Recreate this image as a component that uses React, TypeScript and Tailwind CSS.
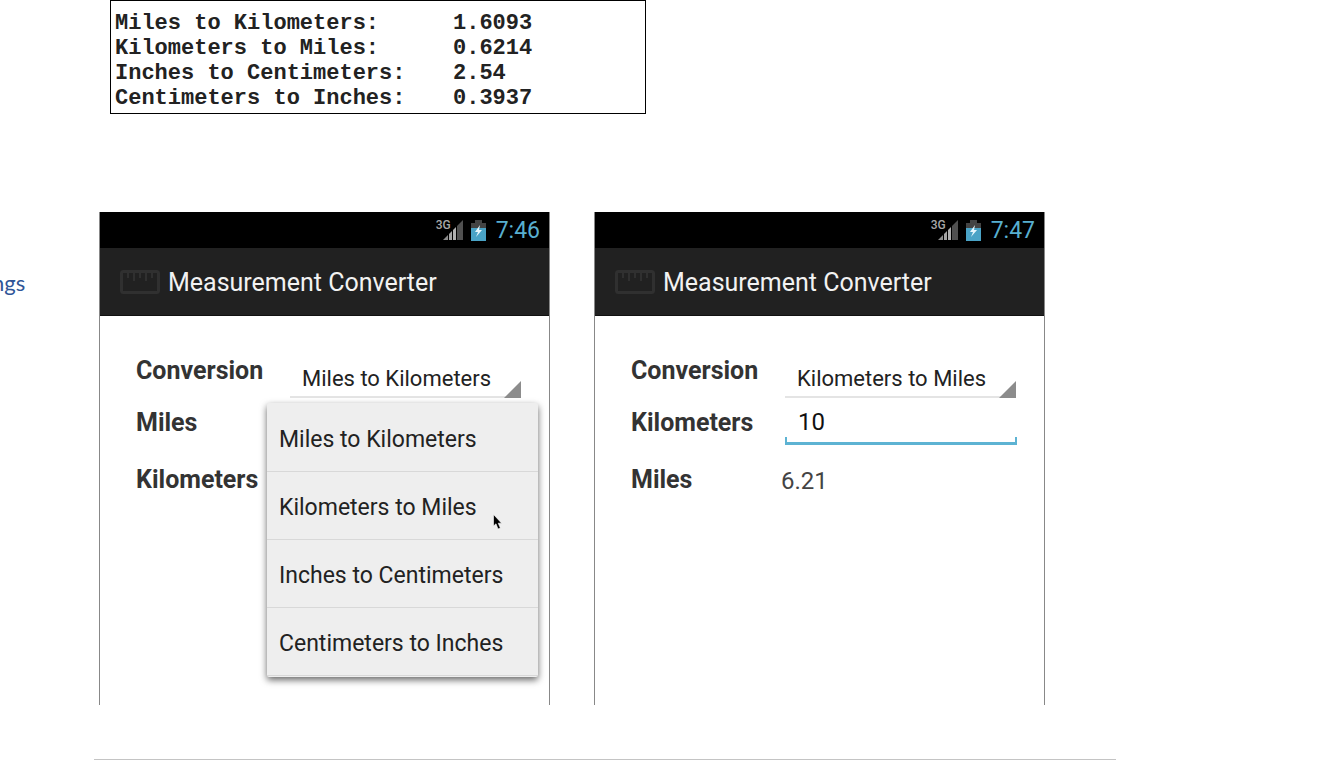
import React from "react";

const FACTORS = [
  ["Miles to Kilometers:", "1.6093"],
  ["Kilometers to Miles:", "0.6214"],
  ["Inches to Centimeters:", "2.54"],
  ["Centimeters to Inches:", "0.3937"],
];

const CONVERSIONS = [
  "Miles to Kilometers",
  "Kilometers to Miles",
  "Inches to Centimeters",
  "Centimeters to Inches",
];

function SignalIcon() {
  return (
    <svg className="h-[22px] w-5" viewBox="0 0 20 22" aria-hidden="true">
      <path d="M0 21 L5 16 V21 Z" fill="#8c8c8c" />
      <path d="M6 15 L9 12 V21 H6 Z" fill="#a4a4a4" />
      <path d="M10 11 L13 8 V21 H10 Z" fill="#b0b0b0" />
      <path d="M14 7 L20 1 V21 H14 Z" fill="#505050" />
    </svg>
  );
}

function BatteryIcon() {
  return (
    <svg className="h-[22px] w-[15px]" viewBox="0 0 15 22" aria-hidden="true">
      <path d="M4 1 H11 V4 H15 V22 H0 V4 H4 Z" fill="#434343" />
      <path d="M0 9 H15 V22 H0 Z" fill="#4aa3c6" />
      <path d="M9 6 L4 13 H7 L5 18 L11 11 H8 Z" fill="#e6f6fc" />
    </svg>
  );
}

function RulerIcon() {
  return (
    <svg className="h-6 w-10" viewBox="0 0 40 24" fill="none" stroke="#303030" aria-hidden="true">
      <rect x="1.5" y="1.5" width="37" height="21" rx="2" strokeWidth="3" />
      <path d="M8 3 V8 M14 3 V11 M20 3 V8 M26 3 V11 M32 3 V8" strokeWidth="2" />
    </svg>
  );
}

function Pointer() {
  return (
    <svg className="h-[17px] w-[10px]" viewBox="0 0 10 17" aria-hidden="true">
      <path d="M0.5 0.5 V12 L3 9.8 L5 15 L7.4 14 L5.2 9.2 H8.6 Z" fill="#000" stroke="#fff" strokeWidth="0.6" />
    </svg>
  );
}

type PhoneProps = {
  id: string;
  time: string;
  conversion: string;
  from: string;
  to: string;
  value?: string;
  result?: string;
  open?: boolean;
};

function Phone({ id, time, conversion, from, to, value = "", result = "", open = false }: PhoneProps) {
  return (
    <section className="border-x border-[#888] font-['Roboto',sans-serif]">
      <div className="flex h-9 items-center justify-end bg-black pr-[9px]">
        <span className="self-start pt-[5px] text-xs leading-4 font-medium text-[#a8a8a8]">3G</span>
        <span className="-ml-2">
          <SignalIcon />
        </span>
        <span className="ml-2">
          <BatteryIcon />
        </span>
        <span className="ml-[10px] pt-[2px] text-[23px] leading-7 text-[#58afd0]">{time}</span>
      </div>
      <header className="flex h-[68px] items-center gap-2 border-b border-[#111] bg-[#212121] pl-5">
        <RulerIcon />
        <h2 className="pt-[2px] text-[25px] leading-8 text-[#f2f2f2]">Measurement Converter</h2>
      </header>
      <form className="grid min-h-[389px] grid-cols-[150px_1fr] grid-rows-[41px_47px_70px] items-center pt-[41px] pr-7 pl-9 text-[#333]">
        <label htmlFor={id + "-conversion"} className="self-start text-[25px] leading-7 font-bold">
          Conversion
        </label>
        <div className="relative ml-1 h-[41px] border-b-2 border-[#e4e4e4]">
          <select
            id={id + "-conversion"}
            defaultValue={conversion}
            className="h-full w-full appearance-none bg-transparent pt-1 pl-3 text-[22px] leading-8 text-[#222] outline-none"
          >
            {CONVERSIONS.map((name) => (
              <option key={name}>{name}</option>
            ))}
          </select>
          <svg className="pointer-events-none absolute right-0 -bottom-[2px] size-[17px]" viewBox="0 0 16 16" aria-hidden="true">
            <path d="M16 0 V16 H0 Z" fill="#8c8c8c" />
          </svg>
          {open && (
            <div
              role="listbox"
              aria-label="Conversion"
              className="absolute top-[46px] -right-[17px] -left-[23px] z-10 divide-y divide-[#d8d8d8] rounded-xs bg-[#eee] py-[1px] shadow-[0_3px_7px_rgba(0,0,0,0.6)]"
            >
              {CONVERSIONS.map((name) => (
                <button
                  key={name}
                  type="button"
                  role="option"
                  aria-selected={name === conversion}
                  className="block h-[68px] w-full pt-1 pl-3 text-left text-[23px] leading-8 text-[#222]"
                >
                  {name}
                </button>
              ))}
              <span className="pointer-events-none absolute top-[111px] left-[226px]">
                <Pointer />
              </span>
            </div>
          )}
        </div>
        <label htmlFor={id + "-amount"} className="pt-[2px] text-[25px] leading-7 font-bold">
          {from}
        </label>
        <div className="ml-1 flex h-full flex-col justify-end">
          <input
            id={id + "-amount"}
            type="text"
            inputMode="decimal"
            defaultValue={value}
            className="h-9 w-full bg-transparent pt-1 pl-[13px] text-2xl leading-8 text-[#111] outline-none"
          />
          <div className="-mt-[1px] -mr-[1px] h-2 border-x-2 border-b-3 border-[#5db3d3]" />
        </div>
        <span className="text-[25px] leading-7 font-bold">{to}</span>
        <output htmlFor={id + "-amount"} className="pt-[2px] text-2xl leading-7 text-[#444]">
          {result}
        </output>
      </form>
    </section>
  );
}

export default function App() {
  return (
    <div className="flex min-h-screen bg-white">
      <nav className="w-[94px] shrink-0 overflow-hidden pt-[267px]">
        <a href="#ngs" className="-ml-2 block font-['Lato',sans-serif] text-[22px] leading-8 text-[#2f5597]">
          ngs
        </a>
      </nav>
      <main className="mr-[221px] flex-1">
        <div className="ml-4 max-w-[536px] border border-black pt-[10px] pb-[2px]">
          <table className="font-['Liberation_Mono',monospace] text-[22px] leading-[25px] font-bold text-[#222]">
            <tbody>
              {FACTORS.map(([name, factor]) => (
                <tr key={name}>
                  <th scope="row" className="w-[342px] pl-1 text-left">
                    {name}
                  </th>
                  <td>{factor}</td>
                </tr>
              ))}
            </tbody>
          </table>
        </div>
        <div className="mt-[98px] mr-[71px] ml-[5px] grid grid-cols-2 gap-11">
          <Phone id="first" time="7:46" conversion="Miles to Kilometers" from="Miles" to="Kilometers" open />
          <Phone
            id="second"
            time="7:47"
            conversion="Kilometers to Miles"
            from="Kilometers"
            to="Miles"
            value="10"
            result="6.21"
          />
        </div>
        <hr className="mt-[54px] border-[#c4c4c4]" />
      </main>
    </div>
  );
}
